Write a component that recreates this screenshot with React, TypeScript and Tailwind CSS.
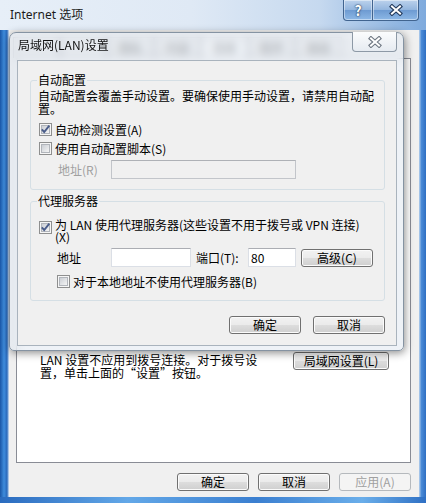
import React from 'react';

// --- small win7 style widgets ---
const Btn = ({ label, w = 'w-[72px]', disabled = false }: { label: string; w?: string; disabled?: boolean }) => (
    <div
        className={`flex h-[18px] ${w} shrink-0 items-center justify-center rounded-[3px] border text-[12px] leading-none ${
            disabled
                ? 'border-[#b5b9bd] bg-[#f4f4f4] text-[#a0a0a0]'
                : 'border-[#707070] bg-[linear-gradient(#f2f2f2_0%,#ebebeb_48%,#dddddd_52%,#cfcfcf_100%)] text-black shadow-[inset_0_0_0_1px_#fbfbfb]'
        }`}
    >
        {label}
    </div>
);

const Check = ({ id, checked = false }: { id: string; checked?: boolean }) => (
    <svg width="13" height="13" viewBox="0 0 13 13" className="shrink-0">
        <defs>
            <linearGradient id={id} x1="0" y1="0" x2="1" y2="1">
                <stop offset="0" stopColor="#c8ccd2" />
                <stop offset="1" stopColor="#f7f7f7" />
            </linearGradient>
        </defs>
        <rect x="0.5" y="0.5" width="12" height="12" fill="#f6f6f6" stroke="#8e8f8f" />
        <rect x="2.5" y="2.5" width="8" height="8" fill={`url(#${id})`} stroke="#b1b5bb" />
        {checked && <path d="M2.8 6.3 L5.2 9 L10.3 2.7" fill="none" stroke="#4a5d8a" strokeWidth="1.9" />}
    </svg>
);

const Field = ({ w, value = '', disabled = false }: { w: string; value?: string; disabled?: boolean }) => (
    <div
        className={`flex h-[19px] ${w} shrink-0 items-center border px-[2px] text-[12px] leading-none ${
            disabled ? 'border-[#c2c5ca] border-t-[#aeb1b6] bg-[#f0f0f0]' : 'border-[#dbdfe6] border-t-[#abadb3] bg-white'
        }`}
    >
        {value}
    </div>
);

const Group = ({ title, h, pt, children }: { title: string; h: string; pt: string; children: React.ReactNode }) => (
    <div className={`relative ${h} ${pt} rounded-[3px] border border-[#d5dfe5] pl-[7px]`}>
        <span className="absolute -top-[7px] left-[6px] bg-[#f0f0f0] px-[1px] leading-[12px]">{title}</span>
        {children}
    </div>
);

const XGlyph = ({ dark, light }: { dark: string; light: string }) => (
    <svg width="14" height="12" viewBox="0 0 14 12">
        <path d="M3 2.5 L11 9.5 M11 2.5 L3 9.5" stroke={dark} strokeWidth="4.2" strokeLinecap="square" fill="none" />
        <path d="M3 2.5 L11 9.5 M11 2.5 L3 9.5" stroke={light} strokeWidth="2" strokeLinecap="square" fill="none" />
    </svg>
);

// the first two tab captions sit under the dialog title and can't be seen
const tabs = ['', '', '隐私', '内容', '连接', '程序', '高级'];

export default function App() {
    return (
        <div className="relative flex h-[503px] w-[426px] flex-col overflow-hidden bg-[#3f80cf] font-['Noto_Sans_CJK_SC',sans-serif] text-[12px] text-black">
            {/* Outer window title bar */}
            <div className="flex h-[30px] shrink-0 items-start justify-between bg-[linear-gradient(90deg,#e7eff8_0%,#dfe9f5_45%,#c6d9ef_75%,#7eaadd_100%)]">
                <span className="pl-[10px] pt-[8px] font-['Noto_Sans','Noto_Sans_CJK_SC',sans-serif] text-[12px] leading-[14px] text-[#1b1b1b]">
                    Internet 选项
                </span>
                <div className="mr-[7px] flex">
                    <div className="flex h-[21px] w-[30px] items-center justify-center rounded-bl-[4px] border border-t-0 border-[#41648f] bg-[linear-gradient(#bcd2ec_0%,#94b6de_48%,#6e9bd2_52%,#8db8e6_100%)] text-[14px] font-bold leading-none text-white shadow-[inset_0_0_0_1px_rgba(255,255,255,0.45)] [text-shadow:0_0_2px_#1c3253,0_0_1px_#1c3253]">
                        ?
                    </div>
                    <div className="flex h-[21px] w-[46px] items-center justify-center rounded-br-[4px] border border-l-0 border-t-0 border-[#41648f] bg-[linear-gradient(#bcd2ec_0%,#94b6de_48%,#6e9bd2_52%,#8db8e6_100%)] shadow-[inset_0_0_0_1px_rgba(255,255,255,0.45)]">
                        <XGlyph dark="#233a5c" light="#ffffff" />
                    </div>
                </div>
            </div>

            <div className="flex min-h-0 flex-1">
                {/* left frame */}
                <div className="w-[9px] shrink-0 bg-[linear-gradient(90deg,#1a56a6_0%,#3e8cdc_45%,#2a69bb_78%,#d5e4f4_100%)]" />

                {/* Outer client area */}
                <div className="flex min-w-0 flex-1 flex-col bg-[#f0f0f0] pb-[6px] pl-[7px] pr-[8px]">
                    <div className="-ml-[3px] flex h-[28px] shrink-0 items-end">
                        {tabs.map((t, i) => (
                            <div
                                key={i}
                                className={`flex h-[21px] w-[47px] items-center justify-center border border-b-0 border-[#898c95] text-[#333] ${
                                    t === '连接' ? 'bg-white' : 'bg-[linear-gradient(#f2f2f2,#e3e3e3)]'
                                }`}
                            >
                                {t}
                            </div>
                        ))}
                    </div>
                    <div className="flex-1 border border-[#898c95] bg-white pl-[23px] pr-[21px] pt-[293px]">
                        <div className="flex items-start justify-between">
                            <p className="mt-[1px] leading-[13px]">
                                LAN 设置不应用到拨号连接。对于拨号设
                                <br />
                                置，单击上面的“设置”按钮。
                            </p>
                            <Btn label="局域网设置(L)" w="w-[96px]" />
                        </div>
                    </div>
                    <div className="mt-[10px] flex shrink-0 justify-end gap-[9px]">
                        <Btn label="确定" />
                        <Btn label="取消" />
                        <Btn label="应用(A)" disabled />
                    </div>
                </div>

                {/* right frame */}
                <div className="w-[7px] shrink-0 bg-[linear-gradient(90deg,#b9d2ee_0%,#4a8ad6_35%,#2f6fc2_100%)]" />
            </div>
            {/* bottom frame */}
            <div className="h-[6px] shrink-0 bg-[linear-gradient(90deg,#2a6bbf,#63a8e8_30%,#3b7fd0_60%,#6aaeea_85%,#2f70c4)]" />

            {/* LAN settings dialog, floating over the options window */}
            <div className="absolute left-[9px] top-[32px] flex h-[319px] w-[395px] flex-col rounded-b-[5px] rounded-t-[7px] border border-[#8593a2] bg-[#e3eaf2]/60 shadow-[1px_2px_8px_rgba(0,0,0,0.45)] backdrop-blur-[4px]">
                <div className="flex h-[27px] shrink-0 items-start justify-between">
                    <span className="pl-[8px] pt-[5px] text-[12px] leading-[14px] text-[#111]">局域网(LAN)设置</span>
                    <div className="-mt-px mr-[6px] flex h-[20px] w-[45px] items-center justify-center rounded-b-[4px] border border-t-0 border-[#8d99a6] bg-[linear-gradient(#fbfcfd,#e6ebf1)]">
                        <XGlyph dark="#6e7782" light="#ffffff" />
                    </div>
                </div>
                <div className="mb-[4px] ml-[7px] mr-[6px] flex flex-1 flex-col border border-[#a9b3bd] bg-[#f0f0f0] pl-[12px] pr-[11px] pt-[19px]">
                    <Group title="自动配置" h="h-[110px]" pt="pt-[8px]">
                        <p className="leading-[13px]">
                            自动配置会覆盖手动设置。要确保使用手动设置，请禁用自动配
                            <br />
                            置。
                        </p>
                        <div className="ml-[1px] mt-[8px] flex h-[13px] items-center gap-[3px]">
                            <Check id="cb1" checked />
                            <span className="leading-none">自动检测设置(A)</span>
                        </div>
                        <div className="ml-[1px] mt-[6px] flex h-[13px] items-center gap-[3px]">
                            <Check id="cb2" />
                            <span className="leading-none">使用自动配置脚本(S)</span>
                        </div>
                        <div className="ml-[20px] mt-[5px] flex items-center">
                            <span className="w-[53px] leading-none text-[#a0a0a0]">地址(R)</span>
                            <Field w="w-[185px]" disabled />
                        </div>
                    </Group>

                    <div className="mt-[11px]">
                        <Group title="代理服务器" h="h-[100px]" pt="pt-[17px]">
                            <div className="ml-[1px] flex items-start gap-[3px]">
                                <div className="mt-[2px]">
                                    <Check id="cb3" checked />
                                </div>
                                <span className="leading-[12px]">
                                    为 LAN 使用代理服务器(这些设置不用于拨号或 VPN 连接)
                                    <br />
                                    (X)
                                </span>
                            </div>
                            <div className="ml-[19px] mt-[5px] flex items-center">
                                <span className="w-[54px] leading-none">地址</span>
                                <Field w="w-[80px]" />
                                <span className="ml-[5px] w-[52px] leading-none">端口(T):</span>
                                <Field w="w-[48px]" value="80" />
                                <div className="ml-[5px]">
                                    <Btn label="高级(C)" />
                                </div>
                            </div>
                            <div className="ml-[19px] mt-[8px] flex h-[13px] items-center gap-[3px]">
                                <Check id="cb4" />
                                <span className="leading-none">对于本地地址不使用代理服务器(B)</span>
                            </div>
                        </Group>
                    </div>

                    <div className="mt-[15px] flex justify-end gap-[12px]">
                        <Btn label="确定" />
                        <Btn label="取消" />
                    </div>
                </div>
            </div>
        </div>
    );
}
